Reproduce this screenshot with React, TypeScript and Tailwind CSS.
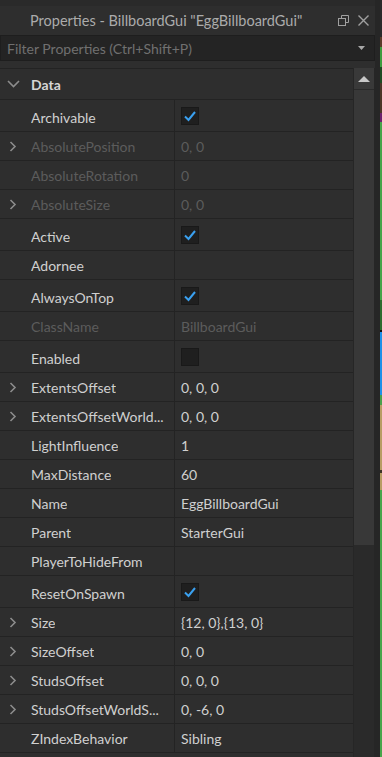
import React from 'react';

type Row = {
  name: string;
  value?: string;
  expand?: boolean;
  check?: boolean | 'off';
  dim?: boolean;
};

const rows: Row[] = [
  { name: 'Archivable', check: true },
  { name: 'AbsolutePosition', value: '0, 0', expand: true, dim: true },
  { name: 'AbsoluteRotation', value: '0', dim: true },
  { name: 'AbsoluteSize', value: '0, 0', expand: true, dim: true },
  { name: 'Active', check: true },
  { name: 'Adornee', value: '' },
  { name: 'AlwaysOnTop', check: true },
  { name: 'ClassName', value: 'BillboardGui', dim: true },
  { name: 'Enabled', check: 'off' },
  { name: 'ExtentsOffset', value: '0, 0, 0', expand: true },
  { name: 'ExtentsOffsetWorld...', value: '0, 0, 0', expand: true },
  { name: 'LightInfluence', value: '1' },
  { name: 'MaxDistance', value: '60' },
  { name: 'Name', value: 'EggBillboardGui' },
  { name: 'Parent', value: 'StarterGui' },
  { name: 'PlayerToHideFrom', value: '' },
  { name: 'ResetOnSpawn', check: true },
  { name: 'Size', value: '{12, 0},{13, 0}', expand: true },
  { name: 'SizeOffset', value: '0, 0', expand: true },
  { name: 'StudsOffset', value: '0, 0, 0', expand: true },
  { name: 'StudsOffsetWorldS...', value: '0, -6, 0', expand: true },
  { name: 'ZIndexBehavior', value: 'Sibling' },
];

// slices of the 3D viewport peeking out on the right edge
const viewport: [string, string][] = [
  ['h-[37px]', 'bg-[#2a2a2a]'],
  ['h-[10px]', 'bg-[#5a3b2a]'],
  ['h-[20px]', 'bg-[#3d9b3e]'],
  ['h-[16px]', 'bg-[#1f4b23]'],
  ['h-[30px]', 'bg-[#4b3627]'],
  ['h-[9px]', 'bg-[#6b216c]'],
  ['h-[178px]', 'bg-[#45a449]'],
  ['h-[30px]', 'bg-[#2c6c2e]'],
  ['h-[2px]', 'bg-[#101010]'],
  ['h-[63px]', 'bg-[#1e90e8]'],
  ['h-[10px]', 'bg-[#4a9f4b]'],
  ['h-[65px]', 'bg-[#b89c64]'],
  ['h-[3px]', 'bg-[#3d3426]'],
  ['h-[17px]', 'bg-[#b89c64]'],
  ['flex-1', 'bg-[#46a54a]'],
];

const Chevron = () => (
  <svg width="8" height="11" viewBox="0 0 8 11">
    <path d="M1.5 1 L6 5.5 L1.5 10" fill="none" stroke="#8c8c8c" strokeWidth="1.6" />
  </svg>
);

const ChevronDown = () => (
  <svg width="13" height="8" viewBox="0 0 13 8">
    <path d="M1 1 L6.5 6.5 L12 1" fill="none" stroke="#8c8c8c" strokeWidth="1.6" />
  </svg>
);

const CheckBox = ({ on }: { on: boolean }) => (
  <div className="w-[18px] h-[18px] bg-[#1f1f1f] border border-[#191919] flex items-center justify-center">
    {on && (
      <svg width="14" height="14" viewBox="0 0 14 14">
        <path d="M2 7.5 L5.5 11 L12 3" fill="none" stroke="#3aa0ef" strokeWidth="2" />
      </svg>
    )}
  </div>
);

const PropRow = ({ row }: { row: Row }) => {
  const tall = row.check !== undefined;
  const color = row.dim ? 'text-[#5c5c5c]' : 'text-[#d0d0d0]';
  return (
    <div className={`flex border-b border-[#232323] ${tall ? 'h-[32px]' : 'h-[29px]'}`}>
      <div className={`w-[175px] flex items-center border-r border-[#232323] shrink-0 ${tall ? 'pt-[3px]' : ''}`}>
        <div className="w-[31px] pl-[9px] flex items-center">{row.expand && <Chevron />}</div>
        <span className={`truncate ${color}`}>{row.name}</span>
      </div>
      <div className="flex-1 flex items-center pl-[6px]">
        {tall ? <CheckBox on={row.check === true} /> : <span className={color}>{row.value}</span>}
      </div>
    </div>
  );
};

export default function App() {
  return (
    <div
      className="w-[382px] h-[757px] bg-[#2e2e2e] flex overflow-hidden text-[14px]"
      style={{ fontFamily: 'Lato, "Noto Sans", sans-serif' }}
    >
      <div className="w-[375px] flex flex-col shrink-0">
        <div className="h-[6px] bg-[#2a2a2a]" />
        <div className="h-[29px] flex items-center pl-[30px] pr-[6px] text-[#ababab] text-[14.5px]">
          <span className="flex-1">Properties - BillboardGui "EggBillboardGui"</span>
          <svg width="11" height="11" viewBox="0 0 11 11" className="mr-[9px]">
            <rect x="0.5" y="3.5" width="7" height="7" fill="none" stroke="#a0a0a0" />
            <path d="M3.5 3.5 V0.5 H10.5 V7.5 H7.5" fill="none" stroke="#a0a0a0" />
          </svg>
          <svg width="11" height="11" viewBox="0 0 11 11">
            <path d="M0.5 0.5 L10.5 10.5 M10.5 0.5 L0.5 10.5" stroke="#a0a0a0" strokeWidth="1.4" />
          </svg>
        </div>
        <div className="h-[26px] bg-[#242424] border border-[#1e1e1e] flex items-center pl-[6px] pr-[9px] text-[#707070]">
          <span className="flex-1">Filter Properties (Ctrl+Shift+P)</span>
          <svg width="7" height="5" viewBox="0 0 7 5">
            <path d="M0 0 H7 L3.5 4 Z" fill="#a8a8a8" />
          </svg>
        </div>
        <div className="h-[7px]" />
        <div className="flex flex-1 min-h-0">
          <div className="w-[353px] border-t border-[#232323] overflow-hidden">
            <div className="h-[31px] flex items-center border-b border-[#232323]">
              <div className="w-[31px] pl-[7px] flex items-center">
                <ChevronDown />
              </div>
              <span className="font-bold text-[#d6d6d6]">Data</span>
            </div>
            {rows.map((r) => (
              <PropRow key={r.name} row={r} />
            ))}
          </div>
          <div className="w-[22px] flex flex-col border-l border-r border-[#262626]">
            <div className="h-[21px] bg-[#393939] flex items-center justify-center">
              <svg width="12" height="6" viewBox="0 0 12 6">
                <path d="M0 6 L6 0 L12 6 Z" fill="#c8c8c8" />
              </svg>
            </div>
            <div className="h-[456px] bg-[#383838] border-t border-[#2a2a2a]" />
            <div className="flex-1 bg-[#2a2a2a]" />
          </div>
        </div>
      </div>
      <div className="w-[5px] bg-[#262626] shrink-0" />
      <div className="flex-1 flex flex-col">
        {viewport.map(([h, bg], i) => (
          <div key={i} className={`${h} ${bg}`} />
        ))}
      </div>
    </div>
  );
}
